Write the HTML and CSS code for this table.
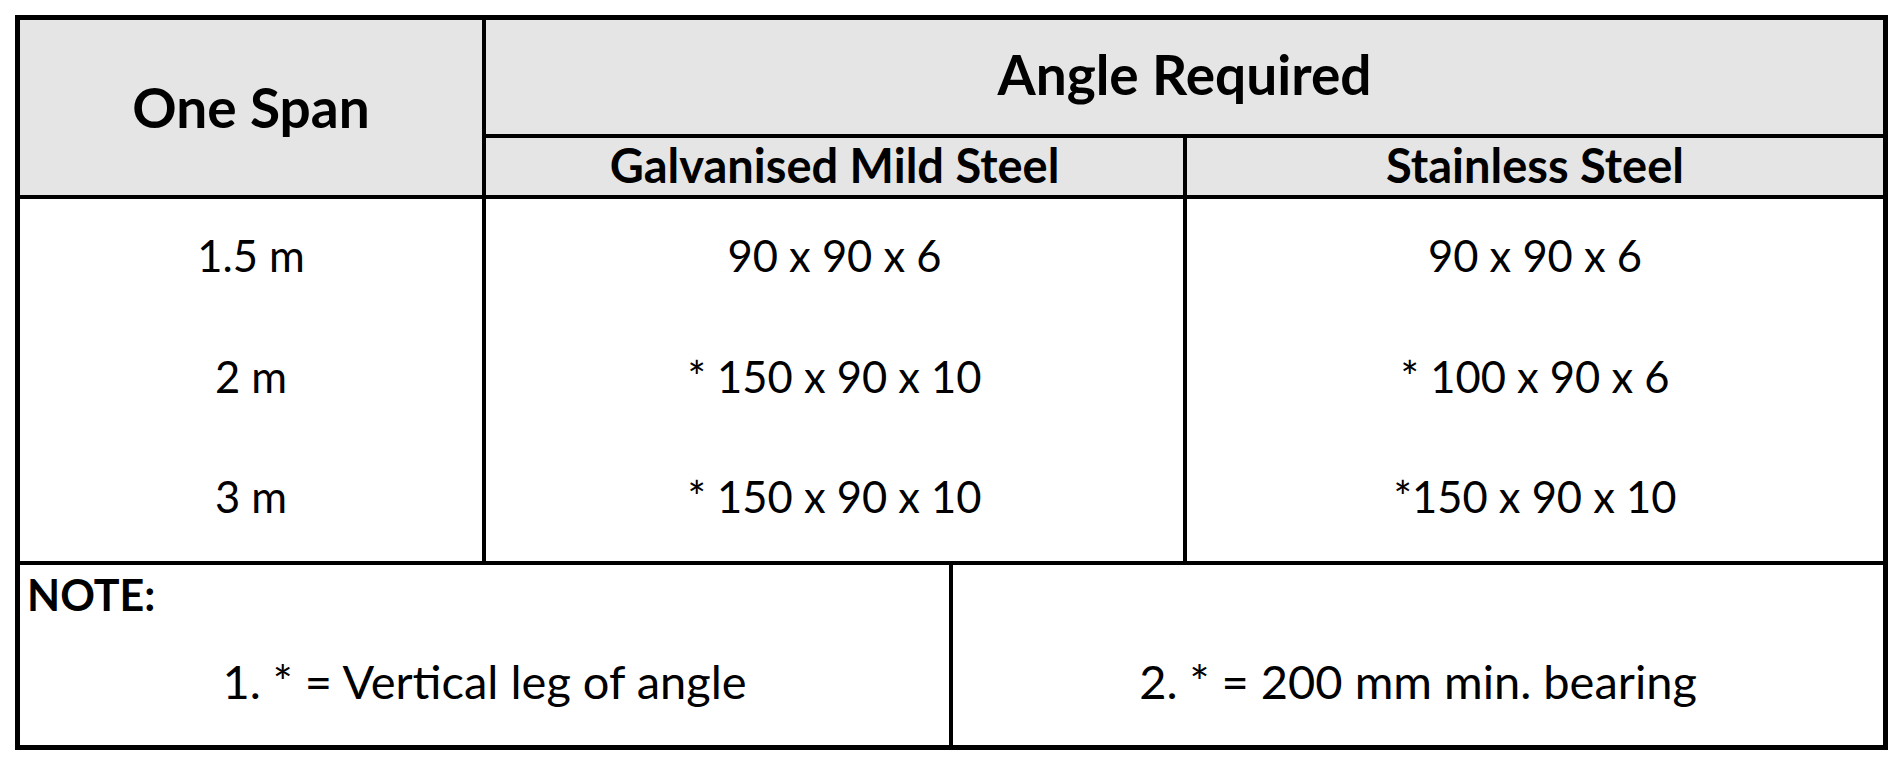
FILE: index.html
```html
<!DOCTYPE html>
<html lang="en">
<head>
<meta charset="utf-8">
<title>Angle Required</title>
<link rel="stylesheet" href="styles.css">
</head>
<body>
<div class="sheet">
  <div class="top">
    <div class="cell head big span-head sep-r sep-b">One Span</div>
    <div class="cell head big angle-head sep-b">Angle Required</div>
    <div class="cell head sub sep-r sep-b">Galvanised Mild Steel</div>
    <div class="cell head sub sep-b">Stainless Steel</div>

    <div class="cell val sep-r">1.5 m</div>
    <div class="cell val sep-r">90 x 90 x 6</div>
    <div class="cell val">90 x 90 x 6</div>

    <div class="cell val sep-r">2 m</div>
    <div class="cell val sep-r">* 150 x 90 x 10</div>
    <div class="cell val">* 100 x 90 x 6</div>

    <div class="cell val sep-r">3 m</div>
    <div class="cell val sep-r">* 150 x 90 x 10</div>
    <div class="cell val">*150 x 90 x 10</div>
  </div>
  <div class="notes">
    <div class="note-cell sep-r">
      <div class="note-label">NOTE:</div>
      <div class="note-text">1. * = Vertical leg of angle</div>
    </div>
    <div class="note-cell note-cell--plain">
      <div class="note-text">2. * = 200 mm min. bearing</div>
    </div>
  </div>
</div>
</body>
</html>
```

FILE: styles.css
```css
* {
  box-sizing: border-box;
}

html, body {
  margin: 0;
  padding: 0;
  background: #ffffff;
}

body {
  padding: 15px;
  font-family: "Lato", "Open Sans", "DejaVu Sans", sans-serif;
  color: #000;
}

.sheet {
  width: 1873px;
  height: 735px;
  border: 5px solid #000;
  display: flex;
  flex-direction: column;
}

.top {
  display: grid;
  grid-template-columns: 466px 701px 1fr;
  grid-template-rows: 118px 61px 121px 121px 120px;
  height: 545px;
  border-bottom: 4px solid #000;
}

.cell {
  display: flex;
  align-items: center;
  justify-content: center;
  white-space: nowrap;
}

.sep-r {
  border-right: 4px solid #000;
}

.sep-b {
  border-bottom: 4px solid #000;
}

.head {
  background: #e5e5e5;
  font-weight: 700;
}

.big {
  font-size: 55px;
  padding-bottom: 6px;
}

.sub {
  font-size: 47px;
  padding-bottom: 4px;
}

.span-head {
  grid-row: 1 / 3;
  grid-column: 1;
  padding-bottom: 2px;
}

.angle-head {
  grid-column: 2 / 4;
}

.val {
  font-size: 43.5px;
  padding-bottom: 10px;
}

.notes {
  flex: 1;
  display: grid;
  grid-template-columns: 933px 1fr;
}

.note-cell {
  display: flex;
  flex-direction: column;
}

.note-cell--plain {
  padding-top: 55px;
}

.note-label {
  height: 55px;
  padding: 5px 0 0 7px;
  font-size: 43px;
  font-weight: 700;
  line-height: 50px;
}

.note-text {
  flex: 1;
  display: flex;
  align-items: center;
  justify-content: center;
  font-size: 47px;
  padding-bottom: 4px;
  white-space: nowrap;
}
```
